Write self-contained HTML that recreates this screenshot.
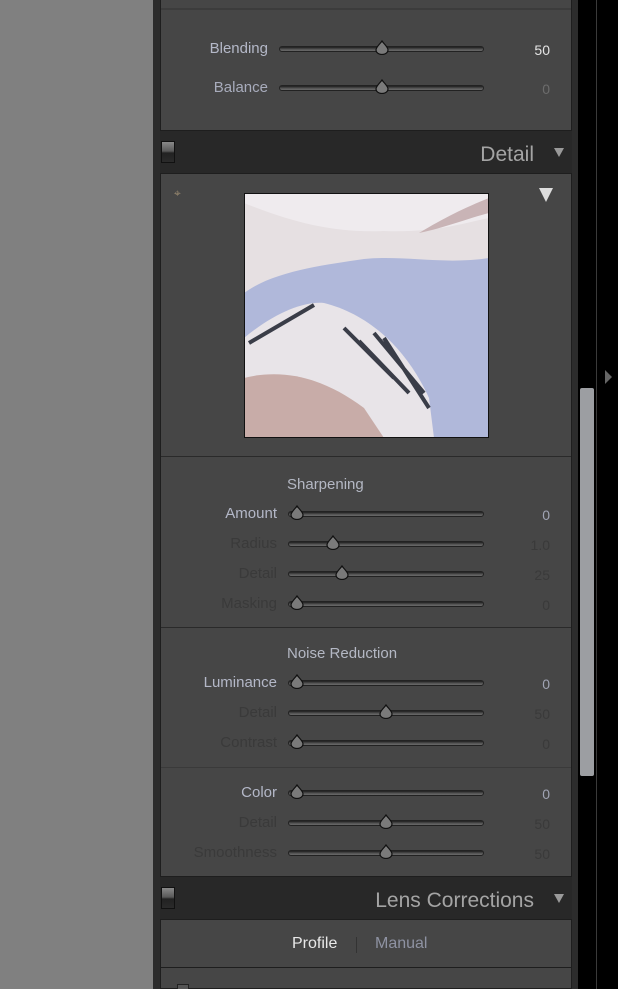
<!DOCTYPE html>
<html style="width:618px;height:989px;overflow:hidden"><head><style>
*{margin:0;padding:0;box-sizing:border-box}
body{width:618px;height:989px;overflow:hidden;background:#000;position:relative;font-family:"Liberation Sans",sans-serif}
.a{position:absolute}
.lbl{position:absolute;text-align:right;font-size:15px;width:150px;line-height:20px}
.val{position:absolute;text-align:right;font-size:14px;width:60px;line-height:20px;left:490px}
.trk{position:absolute;height:6px;border-radius:3px;background:linear-gradient(#1e1e1e,#555 60%,#6a6a6a);border:1px solid #222}
.th{position:absolute;width:14px;height:15px}
.hdr{position:absolute;left:160px;width:412px;background:#282828}
.sw{position:absolute;left:161px;width:14px;height:22px;border:1px solid #111;background:linear-gradient(#8a8a8a 0,#5a5a5a 45%,#222 55%,#2a2a2a)}
.ht{position:absolute;right:80px;color:#a4a4a4;font-size:21px}
.tri{position:absolute;width:0;height:0;border-left:5px solid transparent;border-right:5px solid transparent;border-top:9px solid #9a9a9a}
.panel{position:absolute;left:160px;width:412px;background:#464646;border:1px solid #1e1e1e}
.sec{position:absolute;font-size:15px;color:#b4b8c4}
</style></head><body>
<div class="a" style="left:0;top:0;width:153px;height:989px;background:#808080"></div>
<div class="a" style="left:153px;top:0;width:7px;height:989px;background:#2c2c2c"></div>
<div class="a" style="left:572px;top:0;width:6px;height:989px;background:#2c2c2c"></div>
<div class="a" style="left:578px;top:0;width:18px;height:989px;background:#000"></div>
<div class="a" style="left:596px;top:0;width:1px;height:989px;background:#3a3a3a"></div>
<div class="a" style="left:580px;top:388px;width:14px;height:388px;background:#9c9ea2;border-radius:2px"></div>
<div class="a" style="left:605px;top:370px;width:0;height:0;border-top:7px solid transparent;border-bottom:7px solid transparent;border-left:7px solid #666"></div>

<div class="panel" style="top:-2px;height:133px"></div>
<div class="a" style="left:161px;top:8px;width:410px;height:2px;background:#3c3c3c"></div>
<div class="hdr" style="top:131px;height:42px"><div class="ht" style="top:12px;right:38px">Detail</div><div class="tri" style="left:394px;top:17px"></div></div>
<div class="sw" style="left:161px;top:141px"></div>

<div class="panel" style="top:173px;height:704px"></div>
<div class="a" style="left:161px;top:456px;width:410px;height:1px;background:#2a2a2a"></div>
<div class="a" style="left:161px;top:627px;width:410px;height:1px;background:#2a2a2a"></div>
<div class="a" style="left:161px;top:767px;width:410px;height:1px;background:#3a3a3a"></div>
<div class="a" style="left:174px;top:186px;color:#9a8a70;font-size:12px">⌖</div>
<div class="a" style="left:539px;top:188px;width:0;height:0;border-left:7px solid transparent;border-right:7px solid transparent;border-top:14px solid #ddd"></div>

<svg class="a" style="left:244px;top:193px" width="245" height="245" viewBox="0 0 245 245">
<rect width="245" height="245" fill="#b0b8da"/>
<path d="M0 0H245V65C200 72 160 62 120 66C80 72 30 78 0 100Z" fill="#e6e0e2"/>
<path d="M0 10C50 30 90 40 140 38C190 40 220 30 245 25V0H0Z" fill="#efebee"/>
<path d="M175 40C200 35 225 25 245 20V5C220 15 200 25 175 40Z" fill="#c9b4b6"/>
<path d="M0 145C30 120 60 108 80 110C120 120 160 150 185 205L190 245H0Z" fill="#e8e4e8"/>
<path d="M0 185C40 175 80 185 120 215L140 245H0Z" fill="#c8aca8"/>
<path d="M5 150L70 112M100 135L150 185M115 148L165 200M130 140L180 200M140 145L185 215" stroke="#3a3d48" stroke-width="4" fill="none"/>
<rect x="0.5" y="0.5" width="244" height="244" fill="none" stroke="#111"/>
</svg>

<div class="sec" style="left:287px;top:476px">Sharpening</div>
<div class="sec" style="left:287px;top:645px">Noise Reduction</div>

<div class="hdr" style="top:877px;height:42px"><div class="ht" style="top:12px;right:38px">Lens Corrections</div><div class="tri" style="left:394px;top:17px"></div></div>
<div class="sw" style="left:161px;top:887px"></div>
<div class="panel" style="top:919px;height:49px"></div>
<div class="a" style="left:292px;top:935px;color:#e8e8e8;font-size:16px">Profile</div>
<div class="a" style="left:356px;top:937px;width:1px;height:16px;background:#333"></div>
<div class="a" style="left:375px;top:935px;color:#8e92a2;font-size:16px">Manual</div>
<div class="panel" style="top:967px;height:22px"></div>
<div class="a" style="left:177px;top:984px;width:12px;height:5px;border:1px solid #222;border-bottom:0;background:#555"></div>

<div id="s"></div>
<script>
var rows=[
["Blending",49,279,382,"50",268,"#b4b8c8","#e4e4e4"],
["Balance",88,279,382,"0",268,"#a8acbc","#6c6c6c"],
["Amount",514,288,297,"0",277,"#b4b8c8","#a0a4b4"],
["Radius",544,288,333,"1.0",277,"#3a3a3a","#3a3a3a"],
["Detail",574,288,342,"25",277,"#3a3a3a","#3a3a3a"],
["Masking",604,288,297,"0",277,"#3a3a3a","#3a3a3a"],
["Luminance",683,288,297,"0",277,"#b4b8c8","#a0a4b4"],
["Detail",713,288,386,"50",277,"#3a3a3a","#3a3a3a"],
["Contrast",743,288,297,"0",277,"#3a3a3a","#3a3a3a"],
["Color",793,288,297,"0",277,"#b4b8c8","#a0a4b4"],
["Detail",823,288,386,"50",277,"#3a3a3a","#3a3a3a"],
["Smoothness",853,288,386,"50",277,"#3a3a3a","#3a3a3a"]];
var h="";
rows.forEach(function(r){
var y=r[1];
h+='<div class="lbl" style="left:'+(r[5]-150)+'px;top:'+(y-10)+'px;color:'+r[6]+'">'+r[0]+'</div>';
h+='<div class="val" style="top:'+(y-9)+'px;color:'+r[7]+'">'+r[4]+'</div>';
h+='<div class="trk" style="left:'+r[2]+'px;top:'+(y-3)+'px;width:'+(484-r[2])+'px"></div>';
h+='<svg class="th" style="left:'+(r[3]-7)+'px;top:'+(y-9)+'px" viewBox="0 0 14 15"><path d="M7 1C9 4 13 7 13 10A6 4.5 0 0 1 1 10C1 7 5 4 7 1Z" fill="#7a7a7a" stroke="#111" stroke-width="1.2"/></svg>';
});
document.getElementById("s").innerHTML=h;
</script>
</body></html>
